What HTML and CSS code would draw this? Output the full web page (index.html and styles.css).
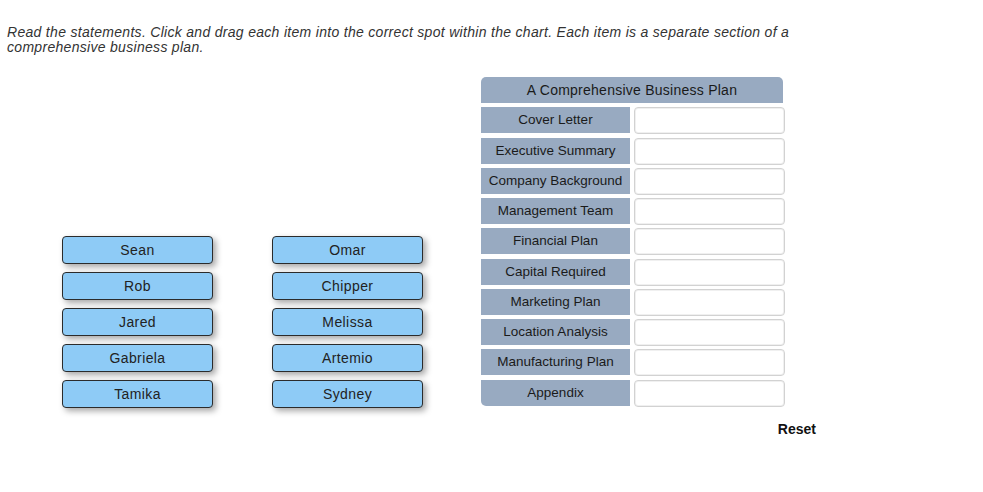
FILE: index.html
```html
<!DOCTYPE html>
<html>
<head>
<meta charset="utf-8">
<link rel="stylesheet" href="styles.css">
</head>
<body>
<div class="page">
  <p class="instructions">Read the statements. Click and drag each item into the correct spot within the chart. Each item is a separate section of a comprehensive business plan.</p>
  <div class="activity">
    <div class="bank">
      <div class="item">Sean</div>
      <div class="item">Omar</div>
      <div class="item">Rob</div>
      <div class="item">Chipper</div>
      <div class="item">Jared</div>
      <div class="item">Melissa</div>
      <div class="item">Gabriela</div>
      <div class="item">Artemio</div>
      <div class="item">Tamika</div>
      <div class="item">Sydney</div>
    </div>
    <div class="chart">
      <div class="chart-head">A Comprehensive Business Plan</div>
      <div class="row"><div class="label">Cover Letter</div><div class="drop"></div></div>
      <div class="row"><div class="label">Executive Summary</div><div class="drop"></div></div>
      <div class="row"><div class="label">Company Background</div><div class="drop"></div></div>
      <div class="row"><div class="label">Management Team</div><div class="drop"></div></div>
      <div class="row"><div class="label">Financial Plan</div><div class="drop"></div></div>
      <div class="row"><div class="label">Capital Required</div><div class="drop"></div></div>
      <div class="row"><div class="label">Marketing Plan</div><div class="drop"></div></div>
      <div class="row"><div class="label">Location Analysis</div><div class="drop"></div></div>
      <div class="row"><div class="label">Manufacturing Plan</div><div class="drop"></div></div>
      <div class="row last"><div class="label">Appendix</div><div class="drop"></div></div>
    </div>
  </div>
  <div class="footer"><span class="reset">Reset</span></div>
</div>
</body>
</html>
```

FILE: styles.css
```css
* { box-sizing: border-box; }
html, body { margin: 0; padding: 0; background: #fff; }
body { font-family: "Liberation Sans", Arial, sans-serif; color: #222; }
.page { width: 816px; padding-top: 25px; }
.instructions {
  margin: 0 0 0 7px;
  max-width: 800px;
  font-size: 14px;
  letter-spacing: 0.3px;
  line-height: 15px;
  font-style: italic;
  color: #333;
}
.activity {
  display: flex;
  align-items: flex-start;
  margin-top: 22px;
  padding-left: 62px;
}
.bank {
  display: grid;
  grid-template-columns: 151px 151px;
  column-gap: 59px;
  row-gap: 8px;
  margin-top: 159px;
}
.item {
  height: 28px;
  background: #8ecbf6;
  border: 1px solid #2b2b2b;
  border-radius: 4px;
  box-shadow: 3px 3px 6px rgba(0,0,0,0.35);
  font-size: 14px;
  letter-spacing: 0.4px;
  line-height: 26px;
  text-align: center;
  color: #222;
}
.chart { margin-left: 58px; width: 304px; }
.chart-head {
  width: 302px;
  height: 26px;
  background: #98aac1;
  border-radius: 5px 5px 0 0;
  font-size: 14px;
  letter-spacing: 0.25px;
  line-height: 26px;
  text-align: center;
  color: #1a1a1a;
}
.row {
  display: flex;
  align-items: flex-start;
  gap: 4px;
  height: 26px;
  margin-top: 4.25px;
}
.label {
  width: 149px;
  height: 26px;
  background: #98aac1;
  font-size: 13.5px;
  line-height: 26px;
  text-align: center;
  color: #1a1a1a;
  white-space: nowrap;
}
.row.last .label { border-radius: 0 0 0 5px; }
.drop {
  width: 151px;
  height: 27px;
  background: #fff;
  border: 1px solid #d2d2d2;
  border-radius: 4px;
  box-shadow: inset 0 0 0 1px #f0f0f0;
}
.footer {
  display: flex;
  justify-content: flex-end;
  margin-top: 13px;
}
.reset {
  font-size: 14px;
  font-weight: bold;
  line-height: 16px;
  color: #111;
}
```
